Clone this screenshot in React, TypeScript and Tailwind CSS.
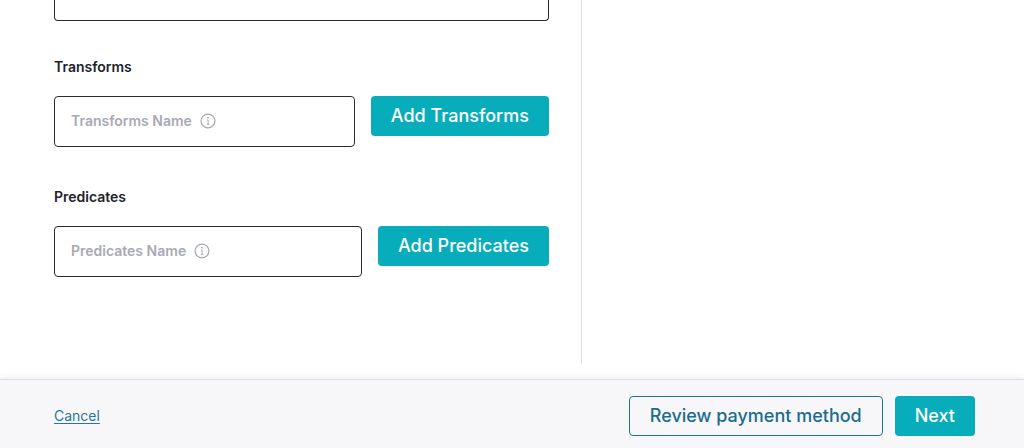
import type { ReactNode } from "react";

function InfoIcon() {
  return (
    <svg viewBox="0 0 16 16" className="size-4 shrink-0" fill="none" stroke="currentColor" aria-hidden="true">
      <circle cx="8" cy="8" r="6.9" strokeWidth="1.3" />
      <path d="M7 7h1.1v4.3M6.8 11.4h2.5" strokeWidth="1" />
      <circle cx="8" cy="4.7" r="0.9" fill="currentColor" stroke="none" />
    </svg>
  );
}

function PrimaryButton({ children }: { children: ReactNode }) {
  return (
    <button
      type="button"
      className="h-10 shrink-0 rounded bg-[#07adbb] px-5 text-lg font-medium whitespace-nowrap text-white hover:bg-[#0699a6]"
    >
      {children}
    </button>
  );
}

function NameSection({ id, title }: { id: string; title: string }) {
  return (
    <section>
      <h2 className="text-sm leading-5 font-semibold text-[#21232b]">{title}</h2>
      <div className="mt-[19px] flex items-start gap-4">
        <div className="relative min-w-0 flex-1">
          <input
            id={id}
            type="text"
            placeholder=" "
            className="peer block h-[51px] w-full rounded border border-[#2b2b33] bg-white px-4 text-sm text-[#21232b]"
          />
          <label
            htmlFor={id}
            className="pointer-events-none absolute inset-y-0 left-[17px] flex items-center gap-2 pb-0.5 text-sm font-semibold text-[#a9a9b4] peer-[:not(:placeholder-shown)]:hidden"
          >
            {title} Name
            <InfoIcon />
          </label>
        </div>
        <PrimaryButton>Add {title}</PrimaryButton>
      </div>
    </section>
  );
}

export default function App() {
  return (
    <div className="flex min-h-screen flex-col bg-white font-['Inter',sans-serif]">
      <main className="grid grow grid-cols-[582fr_442fr] pb-[15px]">
        <form className="flex flex-col border-r border-[#dedee3] pr-8 pl-[54px]">
          <input
            type="text"
            aria-label="Name"
            className="block h-[21px] w-full rounded-b border border-t-0 border-[#2b2b33] px-4 text-sm"
          />
          <div className="mt-9 flex flex-col gap-10">
            <NameSection id="transforms" title="Transforms" />
            <NameSection id="predicates" title="Predicates" />
          </div>
        </form>
      </main>
      <footer className="flex items-center justify-between border-t border-[#dcdde3] bg-[#f7f7fa] pt-4 pr-[49px] pb-3 pl-[54px] shadow-[0_-1px_8px_rgba(0,0,0,0.08)]">
        <a href="#cancel" className="text-sm text-[#2a7698] underline underline-offset-2">
          Cancel
        </a>
        <div className="flex gap-3">
          <button
            type="button"
            className="h-10 rounded border border-[#1d7690] px-5 text-lg font-medium whitespace-nowrap text-[#1b6d8c] hover:bg-[#eef8fa]"
          >
            Review payment method
          </button>
          <PrimaryButton>Next</PrimaryButton>
        </div>
      </footer>
    </div>
  );
}
